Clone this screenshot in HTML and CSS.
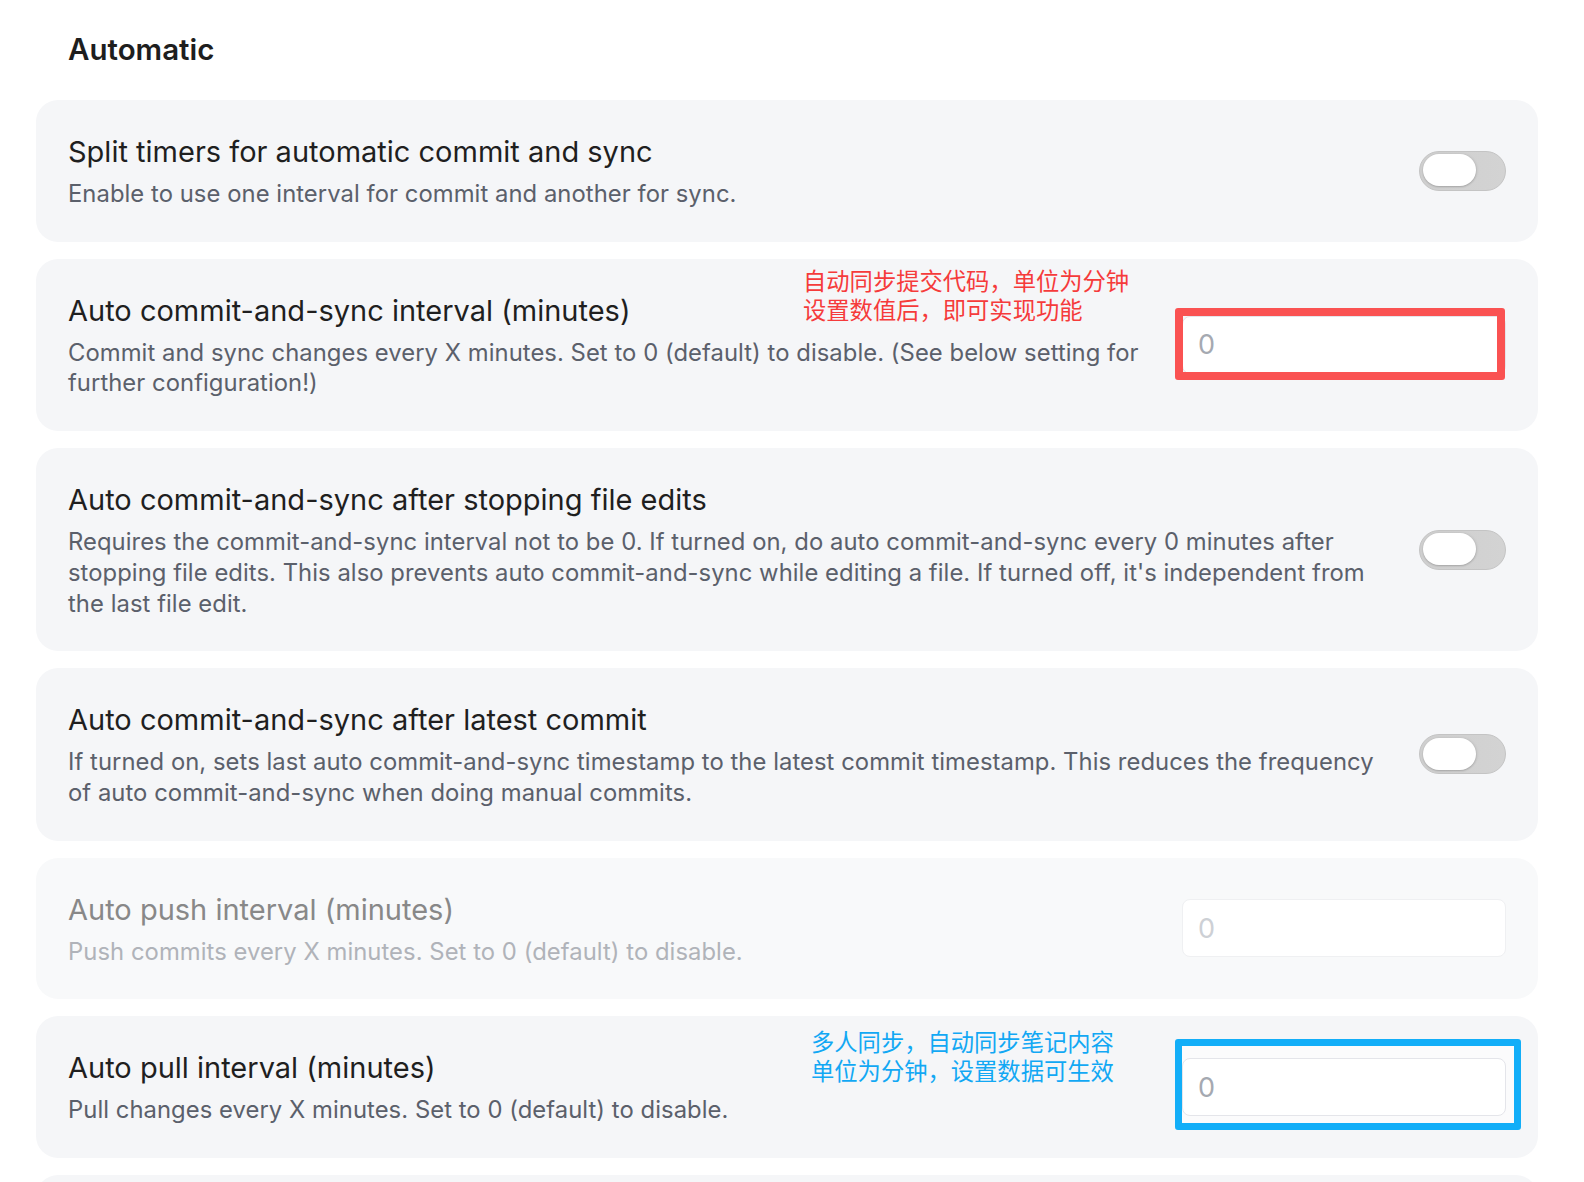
FILE: index.html
```html
<!DOCTYPE html>
<html lang="en">
<head>
<meta charset="utf-8">
<title>Automatic</title>
<link rel="stylesheet" href="styles.css">
</head>
<body>
<div class="page">
  <h2 class="heading">Automatic</h2>
  <div class="list">
    <div class="item">
      <div class="info">
        <div class="name">Split timers for automatic commit and sync</div>
        <div class="desc">Enable to use one interval for commit and another for sync.</div>
      </div>
      <div class="control"><div class="toggle"><span class="knob"></span></div></div>
    </div>

    <div class="item">
      <div class="info">
        <div class="name">Auto commit-and-sync interval (minutes)</div>
        <div class="desc">Commit and sync changes every X minutes. Set to 0 (default) to disable. (See below setting for further configuration!)</div>
      </div>
      <div class="control mark-red"><input class="input" type="text" placeholder="0"></div>
      <div class="note note-red">自动同步提交代码，单位为分钟<br>设置数值后，即可实现功能</div>
    </div>

    <div class="item">
      <div class="info">
        <div class="name">Auto commit-and-sync after stopping file edits</div>
        <div class="desc">Requires the commit-and-sync interval not to be 0. If turned on, do auto commit-and-sync every 0 minutes after stopping file edits. This also prevents auto commit-and-sync while editing a file. If turned off, it's independent from the last file edit.</div>
      </div>
      <div class="control"><div class="toggle"><span class="knob"></span></div></div>
    </div>

    <div class="item">
      <div class="info">
        <div class="name">Auto commit-and-sync after latest commit</div>
        <div class="desc">If turned on, sets last auto commit-and-sync timestamp to the latest commit timestamp. This reduces the frequency of auto commit-and-sync when doing manual commits.</div>
      </div>
      <div class="control"><div class="toggle"><span class="knob"></span></div></div>
    </div>

    <div class="item disabled">
      <div class="info">
        <div class="name">Auto push interval (minutes)</div>
        <div class="desc">Push commits every X minutes. Set to 0 (default) to disable.</div>
      </div>
      <div class="control"><input class="input" type="text" placeholder="0" disabled></div>
    </div>

    <div class="item">
      <div class="info">
        <div class="name">Auto pull interval (minutes)</div>
        <div class="desc">Pull changes every X minutes. Set to 0 (default) to disable.</div>
      </div>
      <div class="control mark-blue"><input class="input" type="text" placeholder="0"></div>
      <div class="note note-blue">多人同步，自动同步笔记内容<br>单位为分钟，设置数据可生效</div>
    </div>

    <div class="item">
      <div class="info">
        <div class="name">&nbsp;</div>
        <div class="desc">&nbsp;</div>
      </div>
    </div>
  </div>
</div>
</body>
</html>
```

FILE: styles.css
```css
html, body {
  margin: 0;
  overflow: hidden;
  background: #ffffff;
}

body {
  font-family: Inter, "Noto Sans", "Noto Sans CJK SC", sans-serif;
}

.page {
  padding: 30px 46px 0 36px;
}

.heading {
  margin: 0 0 31px 32px;
  font-size: 29.5px;
  line-height: 39px;
  font-weight: 600;
  color: #1e1e1e;
}

.list {
  display: flex;
  flex-direction: column;
  gap: 16.8px;
}

.item {
  position: relative;
  display: flex;
  align-items: center;
  gap: 32px;
  padding: 32px;
  background: #f5f6f8;
  border-radius: 22px;
}

.info {
  flex: 1 1 auto;
  min-width: 0;
}

.name {
  font-size: 29px;
  line-height: 39px;
  color: #1f1f1f;
}

.desc {
  margin-top: 8px;
  font-size: 23.8px;
  line-height: 30.8px;
  letter-spacing: 0.06px;
  color: #5b606b;
}

.control {
  position: relative;
  z-index: 0;
  flex: 0 0 auto;
}

.toggle {
  width: 87px;
  height: 40px;
  box-sizing: border-box;
  border-radius: 20px;
  background: linear-gradient(90deg, #cfcfcf, #d3d3d3);
  border: 1.5px solid #c4c4c4;
  padding: 2.5px 0 0 2.5px;
}

.knob {
  display: block;
  width: 53px;
  height: 32px;
  border-radius: 16px;
  background: #ffffff;
  box-shadow: 0 1px 2px rgba(0, 0, 0, 0.18), 1px 0 3px rgba(0, 0, 0, 0.08);
}

.input {
  display: block;
  width: 324px;
  height: 58px;
  box-sizing: border-box;
  margin: 0;
  border: 1.5px solid #e4e5ea;
  border-radius: 8px;
  background: #ffffff;
  padding: 0 15px;
  font-family: Inter, "Noto Sans", sans-serif;
  font-size: 27px;
  color: #1f1f1f;
  outline: none;
}

.input::placeholder {
  color: #a5a9b1;
}

.mark-red::after {
  content: "";
  position: absolute;
  left: -7px;
  top: -7.5px;
  right: 1.5px;
  bottom: -6.5px;
  border: 8px solid #fa5252;
  border-radius: 3px;
  background: transparent;
  z-index: 1;
  pointer-events: none;
}

.mark-blue::before {
  content: "";
  position: absolute;
  left: -7px;
  top: -19px;
  right: -15px;
  bottom: -14px;
  border: 7.5px solid #12aef8;
  border-radius: 3px;
  background: #fbfbfc;
  z-index: -1;
}

.note {
  position: absolute;
  font-family: "Noto Sans CJK SC", sans-serif;
  font-size: 23.3px;
  line-height: 29.5px;
  white-space: nowrap;
}

.note-red {
  left: 767px;
  top: 7px;
  color: #f53b3b;
}

.note-blue {
  left: 775px;
  top: 10.5px;
  color: #12a8f4;
}

.item.disabled {
  background: #f8f9fa;
}

.item.disabled .name {
  color: #888888;
}

.item.disabled .desc {
  color: #b0b3b9;
}

.item.disabled .input {
  border-color: #eff0f2;
}

.item.disabled .input::placeholder {
  color: #cdd0d5;
}
```
